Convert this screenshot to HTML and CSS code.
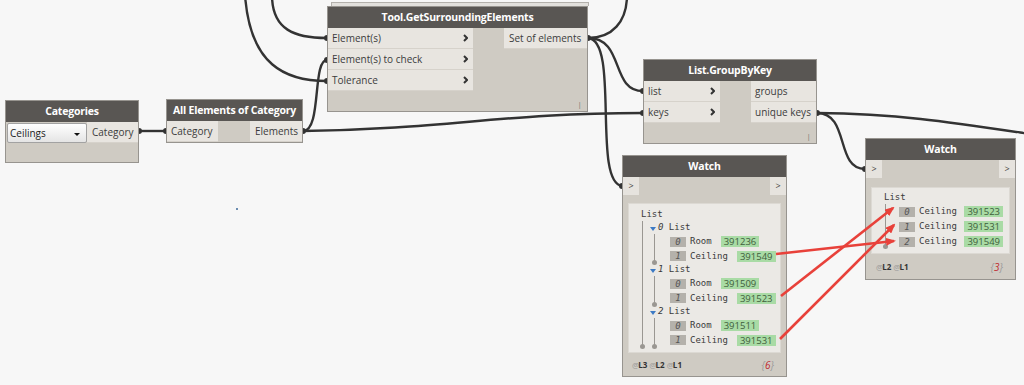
FILE: index.html
```html
<!DOCTYPE html>
<html lang="en">
<head>
    <meta charset="UTF-8">
    <title>Dynamo - GroupByKey</title>
    <link rel="stylesheet" href="styles.css">
</head>
<body>
<div class="canvas">
    <!-- wires sit under the nodes -->
    <svg class="wires" width="1024" height="385">
        <g fill="none" stroke="#333" stroke-width="2.4">
            <path d="M272,-5 C272,30 295,38 327,38"/>
            <path d="M245,-5 C250,65 285,81 327,81"/>
            <path d="M303,131 C322,131 312,60 327,60"/>
            <path d="M303,131 C450,129 500,113 643,113"/>
            <path d="M139,131 L166,131"/>
            <path d="M588,38 C612,38 627,22 627,-5"/>
            <path d="M588,38 C625,38 610,91 643,91"/>
            <path d="M588,38 C620,40 592,182 622,186"/>
            <path d="M817,113 C850,113 835,169 865,169"/>
            <path d="M817,113 C900,114 950,122 1030,134"/>
        </g>
        <g fill="#333">
            <circle cx="139" cy="131" r="3"/>
            <circle cx="166" cy="131" r="3"/>
            <circle cx="303" cy="131" r="3"/>
            <circle cx="327" cy="38" r="3"/>
            <circle cx="327" cy="60" r="3"/>
            <circle cx="327" cy="81" r="3"/>
            <circle cx="588" cy="38" r="3"/>
            <circle cx="643" cy="91" r="3"/>
            <circle cx="643" cy="113" r="3"/>
            <circle cx="817" cy="113" r="3"/>
            <circle cx="622" cy="186" r="3"/>
            <circle cx="865" cy="169" r="3"/>
        </g>
        <rect x="236" y="208" width="2" height="2" fill="#6a8cb0"/>
    </svg>

    <div class="node n-categories">
        <div class="node-title">Categories</div>
        <div class="ports">
            <div class="dropdown">Ceilings<span class="caret"></span></div>
            <div class="port out">Category</div>
        </div>
    </div>

    <div class="node n-allelements">
        <div class="node-title">All Elements of Category</div>
        <div class="ports">
            <div class="port in">Category</div>
            <div class="port out">Elements</div>
        </div>
    </div>

    <div class="node n-tool">
        <div class="node-title">Tool.GetSurroundingElements</div>
        <div class="ports">
            <div class="inputs">
                <div class="port in wide">Element(s)<svg class="chev" width="5" height="8"><polyline points="1,1 4,4 1,7"/></svg></div>
                <div class="port in wide">Element(s) to check<svg class="chev" width="5" height="8"><polyline points="1,1 4,4 1,7"/></svg></div>
                <div class="port in wide">Tolerance<svg class="chev" width="5" height="8"><polyline points="1,1 4,4 1,7"/></svg></div>
            </div>
            <div class="outputs">
                <div class="port out">Set of elements</div>
            </div>
        </div>
        <div class="lace">|</div>
    </div>

    <div class="node n-group">
        <div class="node-title">List.GroupByKey</div>
        <div class="ports">
            <div class="inputs">
                <div class="port in short">list<svg class="chev" width="5" height="8"><polyline points="1,1 4,4 1,7"/></svg></div>
                <div class="port in short">keys<svg class="chev" width="5" height="8"><polyline points="1,1 4,4 1,7"/></svg></div>
            </div>
            <div class="outputs">
                <div class="port out">groups</div>
                <div class="port out">unique keys</div>
            </div>
        </div>
        <div class="lace">|</div>
    </div>

    <div class="node watch n-watch1">
        <div class="node-title">Watch</div>
        <div class="watch-io">
            <div class="cell">&gt;</div>
            <div class="cell">&gt;</div>
        </div>
        <div class="panel">
            <div class="trow">List</div>
            <div class="tbranch outer">
                <div class="trow sub"><span class="tri"></span><i>0</i>&nbsp;List</div>
                <div class="tbranch inner">
                    <div class="trow item room"><span class="idx">0</span>Room<span class="val">391236</span></div>
                    <div class="trow item"><span class="idx">1</span>Ceiling<span class="val">391549</span></div>
                </div>
                <div class="trow sub"><span class="tri"></span><i>1</i>&nbsp;List</div>
                <div class="tbranch inner">
                    <div class="trow item room"><span class="idx">0</span>Room<span class="val">391509</span></div>
                    <div class="trow item"><span class="idx">1</span>Ceiling<span class="val">391523</span></div>
                </div>
                <div class="trow sub"><span class="tri"></span><i>2</i>&nbsp;List</div>
                <div class="tbranch inner">
                    <div class="trow item room"><span class="idx">0</span>Room<span class="val">391511</span></div>
                    <div class="trow item"><span class="idx">1</span>Ceiling<span class="val">391531</span></div>
                </div>
            </div>
        </div>
        <div class="watch-foot">
            <span class="levels"><span>@</span><b>L3</b> <span>@</span><b>L2</b> <span>@</span><b>L1</b></span>
            <span class="count"><span>{</span>6<span>}</span></span>
        </div>
    </div>

    <div class="node watch n-watch2">
        <div class="node-title">Watch</div>
        <div class="watch-io">
            <div class="cell">&gt;</div>
            <div class="cell">&gt;</div>
        </div>
        <div class="panel">
            <div class="trow">List</div>
            <div class="tbranch flat">
                <div class="trow item wide-row"><span class="idx">0</span>Ceiling<span class="val">391523</span></div>
                <div class="trow item wide-row"><span class="idx">1</span>Ceiling<span class="val">391531</span></div>
                <div class="trow item wide-row"><span class="idx">2</span>Ceiling<span class="val">391549</span></div>
            </div>
        </div>
        <div class="watch-foot">
            <span class="levels"><span>@</span><b>L2</b> <span>@</span><b>L1</b></span>
            <span class="count"><span>{</span>3<span>}</span></span>
        </div>
    </div>

    <!-- red annotation arrows on top -->
    <svg class="arrows" width="1024" height="385">
        <defs>
            <marker id="head" markerWidth="10" markerHeight="8" refX="8" refY="4" orient="auto" markerUnits="userSpaceOnUse">
                <path d="M0,0 L10,4 L0,8 Z" fill="#e8413a"/>
            </marker>
        </defs>
        <g stroke="#e8413a" stroke-width="2.6" fill="none" marker-end="url(#head)">
            <line x1="776" y1="254" x2="894" y2="241"/>
            <line x1="781" y1="296" x2="893" y2="208"/>
            <line x1="780" y1="339" x2="894" y2="225"/>
        </g>
    </svg>
</div>
</body>
</html>
```

FILE: styles.css
```css
body {
    margin: 0;
    background: #f7f7f7;
    font-family: "Open Sans", sans-serif;
    font-size: 10px;
    color: #333;
}
.canvas {
    position: relative;
    width: 1024px;
    height: 385px;
    overflow: hidden;
}
.wires, .arrows {
    position: absolute;
    left: 0;
    top: 0;
}
.wires { z-index: 0; }
.arrows { z-index: 3; }

.node {
    position: absolute;
    z-index: 1;
    background: #cfcbc3;
    border: 1px solid #97948f;
    box-sizing: border-box;
    display: flex;
    flex-direction: column;
}
.node-title {
    background: #595653;
    color: #fff;
    font-weight: bold;
    font-size: 10.5px;
    text-align: center;
    height: 21px;
    line-height: 21px;
    letter-spacing: -0.2px;
}
.ports {
    display: flex;
    justify-content: space-between;
}
.inputs, .outputs {
    display: flex;
    flex-direction: column;
}
.port {
    height: 21px;
    line-height: 20px;
    background: #e8e5e0;
    border-bottom: 1px solid #d6d2cb;
    box-sizing: border-box;
    padding: 0 5px;
    display: flex;
    justify-content: space-between;
    align-items: center;
    color: #3c3c3c;
    white-space: nowrap;
}
.port.in { padding-left: 4px; }
.port.wide { width: 145px; }
.port.short { width: 76px; }
.chev {
    fill: none;
    stroke: #333;
    stroke-width: 2;
}
.lace {
    margin-top: auto;
    align-self: flex-end;
    padding: 0 5px 2px 0;
    font-size: 8px;
    color: #777;
}

/* nodes on the canvas */
.n-categories { left: 5px; top: 100px; width: 134px; height: 63px; }
.n-allelements { left: 166px; top: 99px; width: 137px; height: 44px; }
.n-allelements .port.in { width: 51px; }
.n-allelements .port.out { width: 52px; }
.n-tool { left: 327px; top: 6px; width: 261px; height: 106px; }
.n-tool::before {
    content: "";
    position: absolute;
    left: 3px;
    right: -2px;
    top: -5px;
    height: 3px;
    border: 1px solid #b3b0ab;
    border-bottom: none;
    background: #e2e0dc;
}
.n-tool .port.out { width: 83px; }
.n-group { left: 643px; top: 59px; width: 174px; height: 85px; }
.n-group .port.out { width: 65px; padding: 0 3px 0 4px; }

.dropdown {
    width: 80px;
    height: 20px;
    margin: 1px 0 0 1px;
    box-sizing: border-box;
    border: 1px solid #a2a2a2;
    border-radius: 2px;
    background: linear-gradient(#ffffff, #e4e4e4);
    padding: 0 0 0 2px;
    line-height: 16px;
    font-size: 10px;
    color: #222;
    display: flex;
    justify-content: space-between;
    align-items: center;
}
.caret {
    width: 0;
    height: 0;
    border-left: 3px solid transparent;
    border-right: 3px solid transparent;
    border-top: 3px solid #111;
    margin: 2px 6px 0 0;
}
.n-categories .port.out { width: 51px; }

/* watch nodes */
.watch-io {
    display: flex;
    justify-content: space-between;
    height: 18px;
}
.watch-io .cell {
    width: 16px;
    background: #e6e3de;
    line-height: 18px;
    text-align: center;
    font-size: 9px;
    color: #444;
}
.panel {
    margin: 8px 5px 0;
    background: #ebe9e5;
    border: 1px solid #dcd9d3;
    padding: 4px 0 5px 12px;
    font-family: "DejaVu Sans Mono", monospace;
    font-size: 9px;
    color: #3a3a3a;
}
.trow {
    height: 13px;
    line-height: 13px;
    display: flex;
    align-items: center;
    white-space: nowrap;
}
.trow i { font-style: italic; }
.tbranch {
    position: relative;
    margin-left: 1px;
    border-left: 1px solid #9a9792;
}
.tbranch::after {
    content: "";
    position: absolute;
    left: -3px;
    bottom: -2px;
    width: 5px;
    height: 5px;
    border-radius: 50%;
    background: #9a9792;
}
.tbranch.inner {
    margin-left: 11px;
    padding-left: 15px;
}
.trow.sub { padding-left: 7px; }
.tri {
    width: 0;
    height: 0;
    border-left: 3px solid transparent;
    border-right: 3px solid transparent;
    border-top: 4px solid #3d7ac4;
    margin: 2px 2px 0 0;
}
.trow.item { height: 14px; }
.trow.item.room { height: 15px; }
.idx {
    width: 16px;
    height: 10px;
    line-height: 10px;
    background: #b4b1ab;
    color: #555;
    font-style: italic;
    text-align: center;
    margin-right: 4px;
}
.val {
    margin-left: 9px;
    background: #a9dba5;
    color: #3f5e3c;
    font-family: "Open Sans", sans-serif;
    font-size: 9.5px;
    height: 11px;
    line-height: 11px;
    padding: 0 3px;
}
.tbranch.flat {
    margin-left: 1px;
    padding-left: 13px;
}
.tbranch.flat::after { bottom: 0; }
.trow.wide-row { height: 15px; }
.trow.wide-row .val { margin-left: auto; margin-right: 6px; }
.n-watch2 .panel { padding-top: 3px; padding-bottom: 4px; margin-top: 9px; }

.watch-foot {
    flex: 1;
    display: flex;
    justify-content: space-between;
    align-items: center;
    padding: 0 12px 0 9px;
    font-size: 8px;
}
.n-watch2 .watch-foot { padding-left: 10px; }
.levels { color: #333; }
.levels span { color: #999; }
.levels b { margin-left: -1px; }
.count {
    color: #c0282d;
    font-style: italic;
    font-size: 10px;
}
.count span { color: #999; }

.n-watch1 { left: 622px; top: 155px; width: 165px; height: 222px; }
.n-watch2 { left: 865px; top: 138px; width: 151px; height: 142px; }
```
